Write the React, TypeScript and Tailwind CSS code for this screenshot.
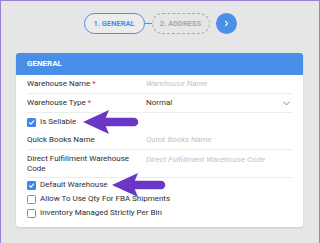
import React from "react";

function Check({ checked }: { checked?: boolean }) {
  return checked ? (
    <span className="flex h-[9px] w-[9px] shrink-0 items-center justify-center rounded-[1.5px] bg-[#3f86e8]">
      <svg width="7" height="7" viewBox="0 0 10 10">
        <path d="M2 5.2 L4.2 7.3 L8.2 2.8" fill="none" stroke="#fff" strokeWidth="1.6" strokeLinecap="round" strokeLinejoin="round" />
      </svg>
    </span>
  ) : (
    <span className="h-[9px] w-[9px] shrink-0 rounded-[1.5px] border border-[#8a8a8a] bg-white" />
  );
}

function Row({ label, req, children, className = "" }: { label: React.ReactNode; req?: boolean; children: React.ReactNode; className?: string }) {
  return (
    <div className={`flex items-center border-b border-[#ececec] ${className}`}>
      <div className="w-[119px] shrink-0 font-normal text-[#2e2e2e] leading-[9.5px]">
        {label}
        {req && <span className="text-[#e53935]"> *</span>}
      </div>
      <div className="flex-1">{children}</div>
    </div>
  );
}

export default function App() {
  return (
    <div
      className="relative h-[243px] w-[320px] overflow-hidden border-l border-r border-t border-[#9b80d6] bg-[#e6e6e6]"
      style={{ fontFamily: "Roboto, 'Liberation Sans', sans-serif" }}
    >
      {/* stepper */}
      <div className="flex items-center justify-center pt-[12px]">
        <div className="flex h-[21px] w-[61px] items-center justify-center rounded-full border-[1.5px] border-[#4a8fe6] bg-[#ececec] text-[7.5px] font-bold text-[#4a8fe6]">
          1. GENERAL
        </div>
        <div className="h-[1.5px] w-[7px] bg-[#4a8fe6]" />
        <div className="flex h-[21px] w-[58px] items-center justify-center rounded-full border-[1.5px] border-dashed border-[#a8a8a8] text-[7.5px] font-bold text-[#a8a8a8]">
          2. ADDRESS
        </div>
        <div className="ml-[6px] flex h-[21px] w-[21px] items-center justify-center rounded-full bg-[#4a8fe8]">
          <svg width="7" height="7" viewBox="0 0 10 10">
            <path d="M3.5 2 L6.5 5 L3.5 8" fill="none" stroke="#fff" strokeWidth="1.6" strokeLinecap="round" strokeLinejoin="round" />
          </svg>
        </div>
      </div>

      {/* card */}
      <div className="ml-[15px] mt-[19px] w-[287px] overflow-hidden rounded-[3px] bg-white text-[8px] shadow-[0_1px_2px_rgba(0,0,0,0.12)]">
        <div className="flex h-[22px] items-center bg-[#4a8fe7] px-[11px] text-[8px] font-bold text-white">GENERAL</div>
        <div className="pl-[11px] pr-[10px] pb-[7px]">
          <Row label="Warehouse Name" req className="h-[19px]">
            <span className="italic text-[#c2c2c2]">Warehouse Name</span>
          </Row>
          <Row label="Warehouse Type" req className="h-[19px]">
            <div className="flex items-center justify-between pr-[3px] text-[#333]">
              <span>Normal</span>
              <svg width="7" height="5" viewBox="0 0 10 6">
                <path d="M1 1 L5 5 L9 1" fill="none" stroke="#777" strokeWidth="1.3" strokeLinecap="round" />
              </svg>
            </div>
          </Row>
          <div className="flex h-[18px] items-center gap-[4px]">
            <Check checked />
            <span className="text-[#2e2e2e]">Is Sellable</span>
          </div>
          <Row label="Quick Books Name" className="h-[19px]">
            <span className="italic text-[#c2c2c2]">Quick Books Name</span>
          </Row>
          <Row label={<>Direct Fulfillment Warehouse<br />Code</>} className="h-[28px]">
            <span className="relative top-[-4px] italic text-[#c2c2c2]">Direct Fulfillment Warehouse Code</span>
          </Row>
          <div className="flex h-[14px] items-center gap-[4px]">
            <Check checked />
            <span className="text-[#2e2e2e]">Default Warehouse</span>
          </div>
          <div className="flex h-[14px] items-center gap-[4px]">
            <Check />
            <span className="text-[#2e2e2e]">Allow To Use Qty For FBA Shipments</span>
          </div>
          <div className="flex h-[14px] items-center gap-[4px]">
            <Check />
            <span className="text-[#2e2e2e]">Inventory Managed Strictly Per Bin</span>
          </div>
        </div>
      </div>

      {/* annotation arrows */}
      <svg className="pointer-events-none absolute left-[-1px] top-[-1px]" width="320" height="243" viewBox="0 0 320 243">
        <g fill="#6a36c4" stroke="none">
          <line x1="104" y1="122" x2="134" y2="122" stroke="#6a36c4" strokeWidth="8.5" strokeLinecap="round" />
          <path d="M83 122 L109 110 L104 122 L109 134 Z" />
          <line x1="132" y1="185" x2="161" y2="185" stroke="#6a36c4" strokeWidth="8.5" strokeLinecap="round" />
          <path d="M112 185 L138 173 L133 185 L138 197 Z" />
        </g>
      </svg>
    </div>
  );
}
